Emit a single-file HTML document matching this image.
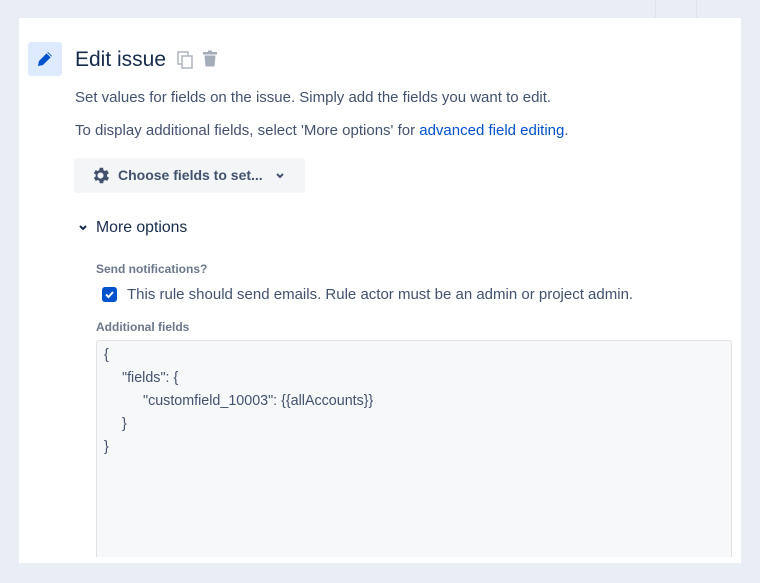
<!DOCTYPE html>
<html><head><style>
body{margin:0;width:760px;height:583px;background:#e9edf4;position:relative;overflow:hidden;font-family:"Liberation Sans",sans-serif;color:#42526e}
.panel{position:absolute;left:19px;top:18px;width:722px;height:545px;background:#fff}
.a{position:absolute;white-space:nowrap}
</style></head><body>
<div class="a" style="left:655px;top:0;width:40px;height:18px;border-left:1px solid #dde2ea;border-right:1px solid #dde2ea"></div>
<div class="panel"></div>
<div class="a" style="left:28px;top:42px;width:34px;height:34px;background:#deebff;border-radius:3px"></div>
<svg class="a" style="left:35px;top:49px" width="20" height="20" viewBox="0 0 20 20"><path d="M3 17l1-5 9-9 4 4-9 9z" fill="#0052cc"/><path d="M12 4l4 4" stroke="#deebff" stroke-width="1.2"/></svg>
<div class="a" style="left:75px;top:48px;font-size:21px;color:#172b4d">Edit issue</div>
<svg class="a" style="left:176px;top:51px" width="18" height="18" viewBox="0 0 18 18"><rect x="2" y="1" width="10" height="12" fill="none" stroke="#b3b9c4" stroke-width="1.6"/><rect x="6" y="5" width="10" height="12" fill="#fff" stroke="#b3b9c4" stroke-width="1.6"/></svg>
<svg class="a" style="left:201px;top:50px" width="18" height="18" viewBox="0 0 18 18"><rect x="2" y="2" width="14" height="2.5" fill="#a5adba"/><rect x="7" y="0.5" width="4" height="2" fill="#a5adba"/><path d="M3.5 5.5h11l-1 11h-9z" fill="#a5adba"/></svg>
<div class="a" style="left:75px;top:89px;font-size:15px">Set values for fields on the issue. Simply add the fields you want to edit.</div>
<div class="a" style="left:75px;top:122px;font-size:15px">To display additional fields, select 'More options' for <span style="color:#0052cc">advanced field editing</span>.</div>
<div class="a" style="left:74px;top:158px;width:231px;height:35px;background:#f4f5f7;border-radius:3px"></div>
<svg class="a" style="left:90px;top:165px" width="21" height="21" viewBox="0 0 24 24"><path fill="#42526e" d="M19.4 13a7.5 7.5 0 000-2l2.1-1.6-2-3.5-2.5 1a7 7 0 00-1.7-1L15 3.2h-4l-.4 2.7a7 7 0 00-1.7 1l-2.5-1-2 3.5L6.6 11a7.5 7.5 0 000 2l-2.1 1.6 2 3.5 2.5-1a7 7 0 001.7 1l.4 2.7h4l.4-2.7a7 7 0 001.7-1l2.5 1 2-3.5zM12 15.5a3.5 3.5 0 110-7 3.5 3.5 0 010 7z"/></svg>
<div class="a" style="left:118px;top:167px;font-size:14px;font-weight:bold;color:#42526e">Choose fields to set...</div>
<svg class="a" style="left:275px;top:172px" width="10" height="8" viewBox="0 0 10 8"><path d="M2 2l3 3 3-3" stroke="#42526e" stroke-width="2" fill="none"/></svg>
<svg class="a" style="left:78px;top:224px" width="10" height="8" viewBox="0 0 10 8"><path d="M2 2l3 3 3-3" stroke="#172b4d" stroke-width="2" fill="none"/></svg>
<div class="a" style="left:96px;top:219px;font-size:15.8px;color:#172b4d">More options</div>
<div class="a" style="left:96px;top:262px;font-size:12px;font-weight:bold;color:#6b778c">Send notifications?</div>
<div class="a" style="left:102px;top:287px;width:15px;height:15px;background:#0052cc;border-radius:3px"></div>
<svg class="a" style="left:102px;top:287px" width="15" height="15" viewBox="0 0 15 15"><path d="M4 7.5l2.5 2.5 4.5-5" stroke="#fff" stroke-width="2" fill="none"/></svg>
<div class="a" style="left:127px;top:286px;font-size:15px">This rule should send emails. Rule actor must be an admin or project admin.</div>
<div class="a" style="left:96px;top:320px;font-size:12px;font-weight:bold;color:#6b778c">Additional fields</div>
<div class="a" style="left:96px;top:340px;width:634px;height:216px;background:#f7f8fa;border:1.5px solid #dfe1e6;border-bottom:none;border-radius:3px 3px 0 0"></div>
<div class="a" style="left:104px;top:347px;font-size:14.3px;color:#42526e">{</div>
<div class="a" style="left:122px;top:370px;font-size:14.3px;color:#42526e">"fields": {</div>
<div class="a" style="left:143px;top:393px;font-size:14.3px;color:#42526e">"customfield_10003": {{allAccounts}}</div>
<div class="a" style="left:122px;top:416px;font-size:14.3px;color:#42526e">}</div>
<div class="a" style="left:104px;top:439px;font-size:14.3px;color:#42526e">}</div>
</body></html>
